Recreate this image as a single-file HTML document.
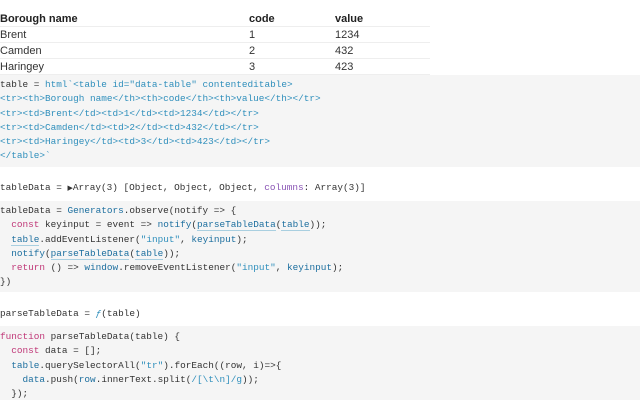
<!DOCTYPE html>
<html><head><meta charset="utf-8"><style>
body{margin:0;background:#fff;width:640px;height:400px;overflow:hidden;color:#333}
table{position:absolute;left:0;top:11px;width:430px;border-collapse:collapse;font:11px "Liberation Sans",sans-serif;color:#333}
th{font-weight:bold;text-align:left;height:15px;padding:0;color:#222;border-bottom:1px solid #eee}
td{height:15px;padding:0;border-bottom:1px solid #eee}
.c2{width:86px}.c3{width:95px}.c1{width:249px}
pre{position:absolute;left:0;margin:0;font:9.4px/14.25px "Liberation Mono",monospace;color:#333;white-space:pre}
.bg{position:absolute;left:0;width:640px;background:#f5f5f5}
.s{color:#2f8fbc}.k{color:#c03878}.v{color:#1d6f9f}.p{color:#8a55b5}
.u{border-bottom:1px solid #a9cfe0}
</style></head><body>
<table><tr><th class="c1">Borough name</th><th class="c2">code</th><th>value</th></tr>
<tr><td>Brent</td><td>1</td><td>1234</td></tr>
<tr><td>Camden</td><td>2</td><td>432</td></tr>
<tr><td>Haringey</td><td>3</td><td>423</td></tr></table>
<div class="bg" style="top:75px;height:92px"></div>
<pre style="top:78px">table = <span class="s">html</span><span class="s">`&lt;table id="data-table" contenteditable&gt;
&lt;tr&gt;&lt;th&gt;Borough name&lt;/th&gt;&lt;th&gt;code&lt;/th&gt;&lt;th&gt;value&lt;/th&gt;&lt;/tr&gt;
&lt;tr&gt;&lt;td&gt;Brent&lt;/td&gt;&lt;td&gt;1&lt;/td&gt;&lt;td&gt;1234&lt;/td&gt;&lt;/tr&gt;
&lt;tr&gt;&lt;td&gt;Camden&lt;/td&gt;&lt;td&gt;2&lt;/td&gt;&lt;td&gt;432&lt;/td&gt;&lt;/tr&gt;
&lt;tr&gt;&lt;td&gt;Haringey&lt;/td&gt;&lt;td&gt;3&lt;/td&gt;&lt;td&gt;423&lt;/td&gt;&lt;/tr&gt;
&lt;/table&gt;`</span></pre>
<pre style="top:181px">tableData = <span style="font-size:7px">▶</span>Array(3) [Object, Object, Object, <span class="p">columns</span>: Array(3)]</pre>
<div class="bg" style="top:201px;height:91px"></div>
<pre style="top:204px">tableData = <span class="v">Generators</span>.observe(notify =&gt; {
  <span class="k">const</span> keyinput = event =&gt; <span class="v">notify</span>(<span class="v u">parseTableData</span>(<span class="v u">table</span>));
  <span class="v u">table</span>.addEventListener(<span class="s">"input"</span>, <span class="v">keyinput</span>);
  <span class="v">notify</span>(<span class="v u">parseTableData</span>(<span class="v u">table</span>));
  <span class="k">return</span> () =&gt; <span class="v">window</span>.removeEventListener(<span class="s">"input"</span>, <span class="v">keyinput</span>);
})</pre>
<pre style="top:307px">parseTableData = <span class="s" style="font-style:italic">ƒ</span>(table)</pre>
<div class="bg" style="top:326px;height:74px"></div>
<pre style="top:330px"><span class="k">function</span> parseTableData(table) {
  <span class="k">const</span> data = [];
  <span class="v">table</span>.querySelectorAll(<span class="s">"tr"</span>).forEach((row, i)=&gt;{
    <span class="v">data</span>.push(<span class="v">row</span>.innerText.split(<span class="s">/[\t\n]/g</span>));
  });</pre>
</body></html>
